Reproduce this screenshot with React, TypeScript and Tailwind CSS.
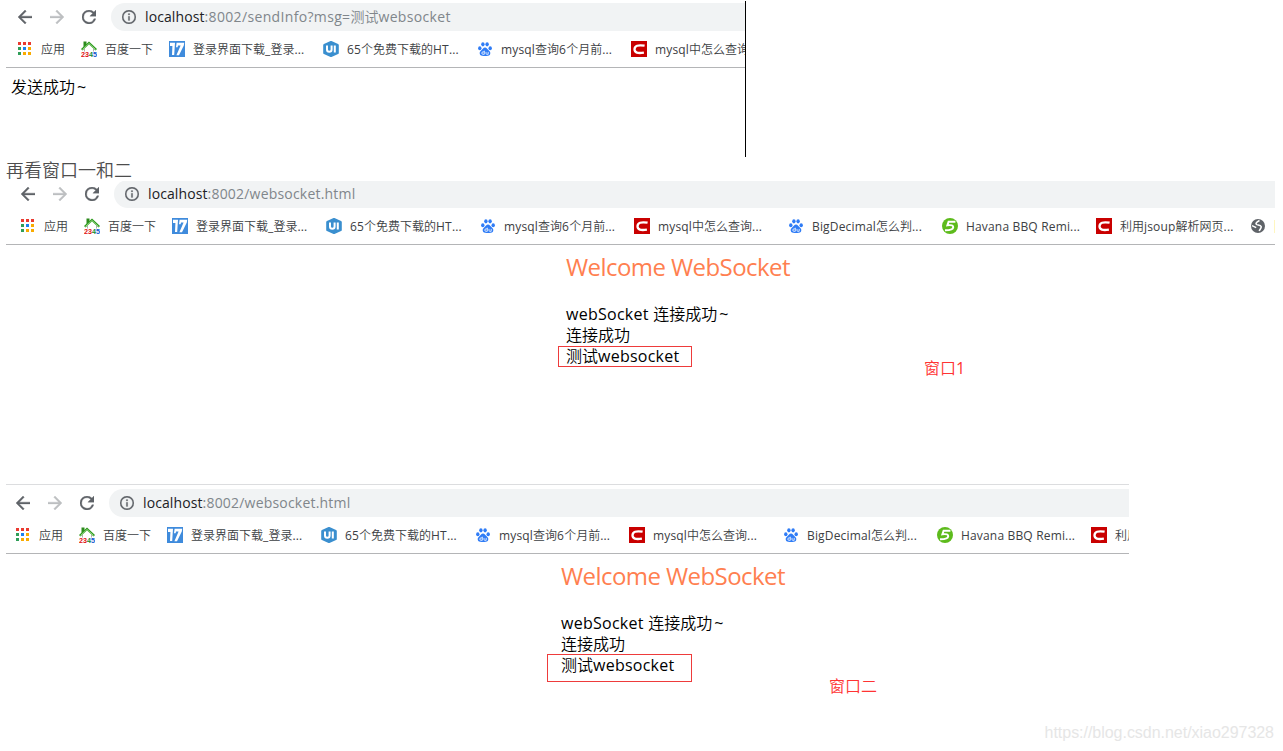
import { Fragment, type ReactNode } from "react";

const latin = /([\x00-\x7F]+)/;

// Latin runs get their own letter spacing, the Chinese text keeps its natural one
const Mixed = ({ text, className }: { text: string; className: string }) => (
  <>
    {text.split(latin).map((part, i) =>
      latin.test(part) ? (
        <span key={i} className={className}>{part}</span>
      ) : (
        <Fragment key={i}>{part}</Fragment>
      )
    )}
  </>
);

const appColors = ["#ea3a30", "#ea3a30", "#ea3a30", "#2f9e58", "#1a82f0", "#f9ab00", "#2f9e58", "#f9ab00", "#f9ab00"];

const AppsIcon = () => (
  <svg viewBox="0 0 16 16" className="w-4 h-4" shapeRendering="crispEdges">
    {appColors.map((c, i) => (
      <rect key={i} x={1 + (i % 3) * 5} y={1 + Math.floor(i / 3) * 5} width="3" height="3" fill={c} />
    ))}
  </svg>
);

const HouseIcon = () => (
  <svg viewBox="0 0 16 16" className="w-4 h-4">
    <path d="M2.500 0.500h3v3l-3 2.500z" fill="#2c8a1c" />
    <path d="M0.700 8.800L8 2l7.300 6.800" fill="none" stroke="#2c9a1c" strokeWidth="2.200" />
    <path d="M1.500 8.500L8 2.500l6.500 6" fill="none" stroke="#c4ecb4" strokeWidth="0.700" />
    <path d="M3.500 8v2.500M12.500 8v2.500" stroke="#999" strokeWidth="0.800" />
    <text y="15.800" fontSize="7" fontWeight="700" fontFamily="Liberation Sans, sans-serif" textLength="16" lengthAdjust="spacingAndGlyphs">
      <tspan fill="#e01010">2</tspan>
      <tspan fill="#e01010">3</tspan>
      <tspan fill="#128a35">4</tspan>
      <tspan fill="#1558d0">5</tspan>
    </text>
  </svg>
);

const SeventeenIcon = () => (
  <svg viewBox="0 0 16 16" className="w-4 h-4">
    <rect width="16" height="16" fill="#3f8bdc" />
    <path d="M1 1.800h5L5.200 14H3L3.400 5H1z" fill="#fff" />
    <path d="M7.600 1.800h7.600L14.800 4.500 10 14.200H7.400L11.600 4.600H9L8.600 6.200H7z" fill="#fff" />
  </svg>
);

const UiIcon = () => (
  <svg viewBox="0 0 16 16" className="w-4 h-4">
    <path d="M8 1.200l6.600 2.800v8L8 14.800 1.400 12V4z" fill="#3a8fcf" stroke="#3a8fcf" strokeWidth="2.400" strokeLinejoin="round" />
    <path d="M4 4.600v3.900a2.300 2.300 0 0 0 4.600 0V4.600M11.800 4.600v6.800" fill="none" stroke="#fff" strokeWidth="2" />
  </svg>
);

const PawIcon = () => (
  <svg viewBox="0 0 16 16" className="w-4 h-4">
    <g fill="#2f7cf6">
      <ellipse cx="2.800" cy="7.200" rx="1.700" ry="2" />
      <ellipse cx="5.900" cy="3.300" rx="1.700" ry="2.100" />
      <ellipse cx="10.100" cy="3.300" rx="1.700" ry="2.100" />
      <ellipse cx="13.200" cy="7.200" rx="1.700" ry="2" />
      <path d="M8 6.500c1.700 0 2.300 1.500 3.400 2.600 1.300 1.200 2.300 2.200 1.800 4-.5 1.900-2.500 2.100-5.200 1.900-2.700.2-4.700 0-5.200-1.900-.5-1.800.5-2.800 1.800-4C5.700 8 6.300 6.500 8 6.500z" />
    </g>
    <path d="M7.300 9.700v3.600H6a1.200 1.200 0 0 1 0-2.400h1.300M9 10.900v1.600q0 .8.800.8h1.400v-2.400" fill="none" stroke="#fff" strokeWidth="0.800" />
  </svg>
);

const CsdnIcon = () => (
  <svg viewBox="0 0 16 16" className="w-4 h-4">
    <rect width="16" height="16" fill="#c90000" />
    <path d="M13.600 4.700Q3.600 3 3.500 8.300Q3.500 13.200 12.900 11.600" fill="none" stroke="#fff" strokeWidth="2.300" />
  </svg>
);

const FiveIcon = () => (
  <svg viewBox="0 0 16 16" className="w-4 h-4">
    <circle cx="8" cy="8" r="8" fill="#5dbb1c" />
    <path d="M13.400 3.800H6.600L5.400 7.300Q11.600 6.500 11.200 9.400Q10.800 12.400 3 12.300" fill="none" stroke="#fff" strokeWidth="2" />
  </svg>
);

const GlobeIcon = () => (
  <svg viewBox="0 0 16 16" className="w-4 h-4">
    <circle cx="8" cy="8" r="7" fill="#5f6368" />
    <path d="M9.500 2.500C7.500 3.500 5.800 4.200 6 6c.2 1.400 4.500.6 5.200 2.400.4 1.500-.8 2.200-2 4.600M2 7.600l4.200 2" fill="none" stroke="#fff" strokeWidth="1.500" />
  </svg>
);

const NoteIcon = () => <div className="w-4 h-[13px] my-px bg-[#fff6c0]" />;

const bookmarks: { label: string; icon: ReactNode; width: string }[] = [
  { label: "应用", icon: <AppsIcon />, width: "w-16" },
  { label: "百度一下", icon: <HouseIcon />, width: "w-[88px]" },
  { label: "登录界面下载_登录...", icon: <SeventeenIcon />, width: "w-[154px]" },
  { label: "65个免费下载的HT...", icon: <UiIcon />, width: "w-[154px]" },
  { label: "mysql查询6个月前...", icon: <PawIcon />, width: "w-[154px]" },
  { label: "mysql中怎么查询...", icon: <CsdnIcon />, width: "w-[154px]" },
  { label: "BigDecimal怎么判...", icon: <PawIcon />, width: "w-[154px]" },
  { label: "Havana BBQ Remi...", icon: <FiveIcon />, width: "w-[154px]" },
  { label: "利用jsoup解析网页...", icon: <CsdnIcon />, width: "w-[154px]" },
  { label: "", icon: <GlobeIcon />, width: "w-6" },
  { label: "", icon: <NoteIcon />, width: "w-6" },
];

const Toolbar = ({ path, tracking }: { path: string; tracking: string }) => (
  <div className="flex items-center h-7 shrink-0">
    <svg viewBox="4 4 16 16" className="w-3.5 h-3.5 ml-px shrink-0" fill="#5f6368" stroke="#5f6368" strokeWidth="0.4">
      <path d="M20 11H7.830l5.590-5.590L12 4l-8 8 8 8 1.410-1.410L7.830 13H20v-2z" />
    </svg>
    <svg viewBox="4 4 16 16" className="w-3.5 h-3.5 ml-[18px] shrink-0" fill="#bdbfc1" stroke="#bdbfc1" strokeWidth="0.4">
      <path d="M12 4l-1.410 1.410L16.170 11H4v2h12.170l-5.580 5.590L12 20l8-8z" />
    </svg>
    <svg viewBox="4 4 16 16" className="w-3.5 h-3.5 ml-[18px] shrink-0" fill="#5f6368" stroke="#5f6368" strokeWidth="0.4">
      <path d="M17.650 6.350A7.950 7.950 0 0 0 12 4a8 8 0 1 0 7.730 10h-2.080A6 6 0 1 1 12 6c1.660 0 3.140.690 4.220 1.780L13 11h7V4l-2.350 2.350z" />
    </svg>
    <div className="flex-1 flex items-center h-7 ml-[15px] pl-[11px] rounded-l-full bg-[#f1f3f4]">
      <svg viewBox="2 2 20 20" className="w-3.5 h-3.5 shrink-0" fill="#5f6368" stroke="#5f6368" strokeWidth="0.3">
        <path d="M11 7h2v2h-2zm0 4h2v6h-2zm1-9a10 10 0 1 0 0 20 10 10 0 0 0 0-20zm0 18a8 8 0 1 1 0-16 8 8 0 0 1 0 16z" />
      </svg>
      <span className="ml-[9px] text-sm leading-5 whitespace-nowrap text-[#80868b]">
        <span className="text-[#202124] tracking-[0.1px]">localhost</span>
        <Mixed text={path} className={tracking} />
      </span>
    </div>
  </div>
);

const BookmarksBar = ({ count }: { count: number }) => (
  <div className="flex items-center h-9 shrink-0">
    {bookmarks.slice(0, count).map((b, i) => (
      <div key={i} className={`flex items-center gap-2 shrink-0 ${b.width}`}>
        <span className="shrink-0">{b.icon}</span>
        <span className="pt-0.5 text-xs whitespace-nowrap text-[#3c4043]">
          <Mixed text={b.label} className="tracking-[0.17px]" />
        </span>
      </div>
    ))}
  </div>
);

interface ChromeProps {
  path: string;
  tracking: string;
  count: number;
  className: string;
}

const Chrome = ({ path, tracking, count, className }: ChromeProps) => (
  <div className={`flex flex-col overflow-hidden border-b border-[#b4b5b7] ${className}`}>
    <Toolbar path={path} tracking={tracking} />
    <BookmarksBar count={count} />
  </div>
);

const Messages = ({ box }: { box: string }) => (
  <div className="w-[240px]">
    <h1 className="-mt-px mb-[21px] text-2xl leading-8 tracking-[-0.57px] text-[#ff7f50] whitespace-nowrap">Welcome WebSocket</h1>
    <div className="text-base leading-[21px] text-black whitespace-nowrap">
      <p>
        <span className="tracking-[0.27px]">webSocket </span>连接成功<span className="ml-0.5">~</span>
      </p>
      <p>连接成功</p>
      <p className="relative">
        <Mixed text="测试websocket" className="tracking-[0.24px]" />
        <span className={`absolute border border-[#ee3b3b] ${box}`} />
      </p>
    </div>
  </div>
);

export default function App() {
  return (
    <div className="w-[1283px] h-[751px] overflow-hidden bg-white pl-1.5 font-['Open_Sans','Noto_Sans_CJK_SC_DemiLight','Noto_Sans_CJK_SC',sans-serif]">
      <section className="w-[740px] h-[156px] mt-px border-r border-black">
        <Chrome path=":8002/sendInfo?msg=测试websocket" tracking="tracking-[0.34px]" count={6} className="pl-[11px] pt-0.5 h-[67px]" />
        <p className="pl-[5px] pt-[9px] text-base leading-[21px] text-black">
          发送成功<span className="ml-0.5">~</span>
        </p>
      </section>

      <p className="h-6 pt-px text-lg leading-6 text-[#4d4d4d]">再看窗口一和二</p>

      <section className="w-[1269px] h-[303px]">
        <Chrome path=":8002/websocket.html" tracking="tracking-[0.2px]" count={11} className="pl-[14px] h-16 justify-end" />
        <div className="flex pl-[560px] pt-[7px]">
          <Messages box="-left-2 top-0 w-[134px] h-[21px]" />
          <span className="ml-[118px] mt-[106px] text-base leading-[21px] text-[#f33]">窗口1</span>
        </div>
      </section>

      <section className="w-[1123px] border-t border-[#dcdddf]">
        <Chrome path=":8002/websocket.html" tracking="tracking-[0.2px]" count={9} className="pl-[9px] pt-1 h-[69px]" />
        <div className="flex pl-[555px] pt-[7px]">
          <Messages box="-left-[14px] -top-px w-[145px] h-7" />
          <span className="ml-[28px] mt-[115px] text-base leading-[21px] text-[#f33]">窗口二</span>
        </div>
      </section>

      <p className="w-[1268px] mt-[26px] text-right text-base leading-5 tracking-[-0.03px] text-[#e6e6e6] font-['Liberation_Sans',sans-serif]">
        https://blog.csdn.net/xiao297328
      </p>
    </div>
  );
}
